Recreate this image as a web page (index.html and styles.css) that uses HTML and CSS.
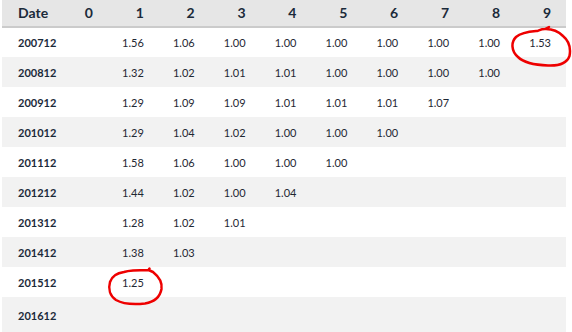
FILE: index.html
```html
<!DOCTYPE html>
<html>
<head>
<meta charset="utf-8">
<link rel="stylesheet" href="styles.css">
</head>
<body>
<div class="wrap">
<table class="tri">
<colgroup><col class="c-date"><col><col><col><col><col><col><col><col><col><col></colgroup>
<thead>
<tr><th class="date">Date</th><th>0</th><th>1</th><th>2</th><th>3</th><th>4</th><th>5</th><th>6</th><th>7</th><th>8</th><th>9</th></tr>
</thead>
<tbody>
<tr><th>200712</th><td></td><td>1.56</td><td>1.06</td><td>1.00</td><td>1.00</td><td>1.00</td><td>1.00</td><td>1.00</td><td>1.00</td><td>1.53</td></tr>
<tr><th>200812</th><td></td><td>1.32</td><td>1.02</td><td>1.01</td><td>1.01</td><td>1.00</td><td>1.00</td><td>1.00</td><td>1.00</td><td></td></tr>
<tr><th>200912</th><td></td><td>1.29</td><td>1.09</td><td>1.09</td><td>1.01</td><td>1.01</td><td>1.01</td><td>1.07</td><td></td><td></td></tr>
<tr><th>201012</th><td></td><td>1.29</td><td>1.04</td><td>1.02</td><td>1.00</td><td>1.00</td><td>1.00</td><td></td><td></td><td></td></tr>
<tr><th>201112</th><td></td><td>1.58</td><td>1.06</td><td>1.00</td><td>1.00</td><td>1.00</td><td></td><td></td><td></td><td></td></tr>
<tr><th>201212</th><td></td><td>1.44</td><td>1.02</td><td>1.00</td><td>1.04</td><td></td><td></td><td></td><td></td><td></td></tr>
<tr><th>201312</th><td></td><td>1.28</td><td>1.02</td><td>1.01</td><td></td><td></td><td></td><td></td><td></td><td></td></tr>
<tr><th>201412</th><td></td><td>1.38</td><td>1.03</td><td></td><td></td><td></td><td></td><td></td><td></td><td></td></tr>
<tr><th>201512</th><td></td><td>1.25</td><td></td><td></td><td></td><td></td><td></td><td></td><td></td><td></td></tr>
<tr class="last"><th>201612</th><td></td><td></td><td></td><td></td><td></td><td></td><td></td><td></td><td></td><td></td></tr>
</tbody>
</table>
<svg class="marks" width="572" height="332" viewBox="0 0 572 332">
<path class="ink" d="M549 27 L545 29 C541 29,539 30.5,537 31 C531 31.5,522 32,516 37 C511 42,511 51,518 57 C524 63,534 65,548 65.5 C559 66,567 63,569.5 56 C571 48,569 41,563 36 C558 31,552 29,546 29"/>
<path class="ink" d="M149.5 268.5 L148.5 270 C140 270,130 270,124 272 C117 273,112 276,110 282 C108 289,110 296,116 300 C123 304,135 304.5,145 303.5 C154 302,160 297,161.5 289 C162.5 282,158 276,153 272 L148.5 270"/>
</svg>
</div>
</body>
</html>
```
FILE: styles.css
```css
html, body {
  margin: 0;
  padding: 0;
  background: #ffffff;
}
.wrap {
  position: relative;
  width: 572px;
  height: 332px;
  overflow: hidden;
  padding-left: 2px;
  box-sizing: border-box;
}
.tri {
  width: 564px;
  table-layout: fixed;
  border-collapse: collapse;
  font-family: Lato, "Open Sans", sans-serif;
  color: #1b2a3a;
}
.c-date {
  width: 55px;
}
.tri thead th {
  height: 26px;
  padding: 0 15px 0 0;
  background: #e6e6e6;
  border-bottom: 2px solid #cbcbcb;
  font-size: 14px;
  font-weight: 700;
  text-align: right;
  vertical-align: middle;
  box-sizing: border-box;
  line-height: 26px;
}
.tri thead th.date {
  text-align: left;
  padding: 0 0 0 16px;
}
.tri tbody tr {
  height: 30px;
}
.tri tbody tr:nth-child(even) {
  background: #f2f2f2;
}
.tri tbody tr.last {
  height: 36px;
}
.tri tbody th {
  text-align: left;
  padding: 0 0 0 16px;
  font-size: 11px;
  font-weight: 700;
  vertical-align: middle;
}
.tri tbody td {
  text-align: right;
  padding: 0 15px 0 0;
  font-size: 11px;
  color: #1f2833;
  vertical-align: middle;
}
.marks {
  position: absolute;
  left: 0;
  top: 0;
  pointer-events: none;
}
.ink {
  fill: none;
  stroke: #ee0000;
  stroke-width: 2.5;
  stroke-linecap: round;
  stroke-linejoin: round;
}
```
